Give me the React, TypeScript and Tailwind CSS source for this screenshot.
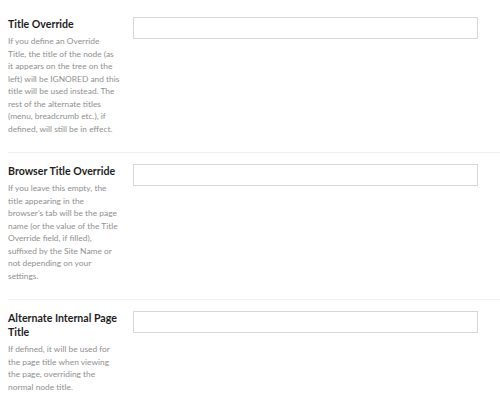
import React from "react";

const sections = [
  {
    title: "Title Override",
    lines: [
      "If you define an Override",
      "Title, the title of the node (as",
      "it appears on the tree on the",
      "left) will be IGNORED and this",
      "title will be used instead. The",
      "rest of the alternate titles",
      "(menu, breadcrumb etc.), if",
      "defined, will still be in effect.",
    ],
  },
  {
    title: "Browser Title Override",
    lines: [
      "If you leave this empty, the",
      "title appearing in the",
      "browser's tab will be the page",
      "name (or the value of the Title",
      "Override field, if filled),",
      "suffixed by the Site Name or",
      "not depending on your",
      "settings.",
    ],
  },
  {
    title: "Alternate Internal Page Title",
    lines: [
      "If defined, it will be used for",
      "the page title when viewing",
      "the page, overriding the",
      "normal node title.",
    ],
  },
];

export default function App() {
  return (
    <div
      className="w-[500px] h-[402px] bg-white pt-[6px] pl-[8px] overflow-hidden"
      style={{ fontFamily: "Lato, 'Open Sans', sans-serif" }}
    >
      {sections.map((s, i) => (
        <div
          key={i}
          className={`flex pt-[11px] pb-[17px] ${i > 0 ? "border-t border-[#f0f0f0]" : ""}`}
        >
          <div className="w-[120px] shrink-0">
            <div className="text-[10.6px] leading-[14px] font-bold text-[#1e1e1e]">{s.title}</div>
            <div className="mt-[4px] text-[8.4px] leading-[12.5px] text-[#8f8f8f]">
              {s.lines.map((l, j) => (
                <div key={j} className="whitespace-nowrap">
                  {l}
                </div>
              ))}
            </div>
          </div>
          <div className="ml-[5px]">
            <div className="w-[345px] h-[22px] border border-[#d6d6d6] bg-white" />
          </div>
        </div>
      ))}
    </div>
  );
}
